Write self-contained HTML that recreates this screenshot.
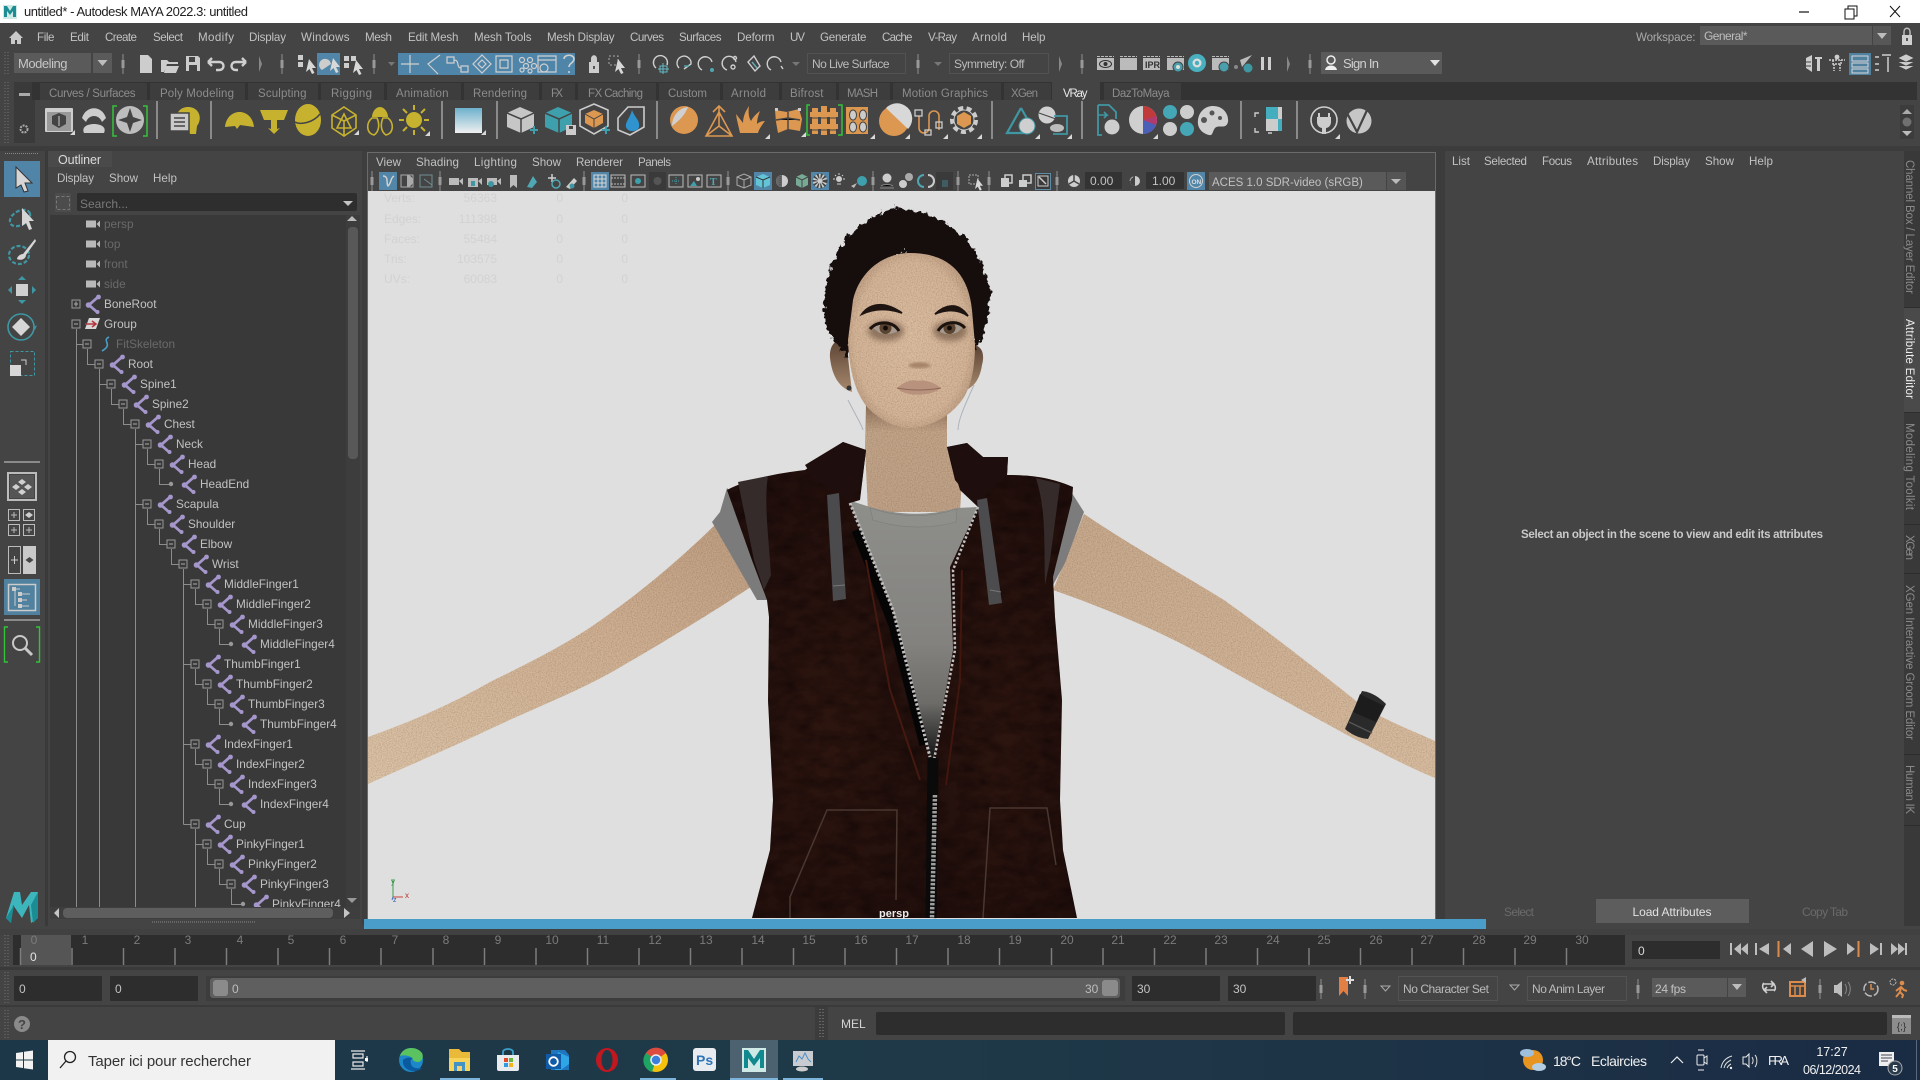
<!DOCTYPE html>
<html lang="fr"><head><meta charset="utf-8"><title>untitled* - Autodesk MAYA 2022.3: untitled</title>
<style>
html,body{margin:0;padding:0;background:#444;width:1920px;height:1080px;overflow:hidden}
svg{display:block}
text{font-family:"Liberation Sans",sans-serif;font-size:12px;fill:#c2c2c2;white-space:pre}
.m text{font-size:11.6px}
.tab text{fill:#8c8c8c;font-size:11.5px}
.tree text{font-size:11.8px}
.dim{fill:#6a6a6a}
.tree text.dim{fill:#6a6a6a}
.tl text{fill:#7b7b7b;text-anchor:middle}
.hud text{fill:#d2d2d2}
.vt text{fill:#8a8a8a;font-size:11.5px}
.tb text{fill:#f0f0f0}
.st{fill:none;stroke:#cfcfcf;stroke-width:1.5}
.w{fill:#cdcdcd}
.y{fill:#c7b22f}
.yo{fill:none;stroke:#c7b22f;stroke-width:1.6}
.o{fill:#dc9750}
.oo{fill:none;stroke:#dc9750;stroke-width:1.6}
.te{fill:#3fa0ad}
.teo{fill:none;stroke:#3f97a3;stroke-width:1.6}
</style></head><body>
<svg width="1920" height="1080" viewBox="0 0 1920 1080" xmlns="http://www.w3.org/2000/svg">
<defs>
<g id="j"><path d="M5-7-4 1 4 8" fill="none" stroke="#a596cc" stroke-width="2.800"/><circle cx="5.500" cy="-7" r="2.400" fill="#a596cc"/><circle cx="-4.500" cy="1" r="2.800" fill="#a596cc"/><circle cx="4.500" cy="8" r="2" fill="#a596cc"/></g>
<g id="b"><rect x="-4" y="-4" width="8" height="8" fill="#393939" stroke="#999"/><path d="M-2 0h4" stroke="#aaa"/></g>
<g id="d"><circle r="2.200" fill="#999"/></g>
<g id="cam"><rect x="-7" y="-3.500" width="10" height="7" fill="#b9b9b9"/><path d="M3.500 0 7-3.500V3.500z" fill="#b9b9b9"/></g>
<path id="c" d="M0 0-5 5H0z" fill="#d8d8d8"/>
<path id="da" d="M-5-3H5L0 3z" fill="#bdbdbd"/>
<g id="sep"><path d="M0-10V10" stroke="#777" stroke-width="1.500"/><rect x="-1.500" y="-4" width="3" height="8" fill="#999"/></g>
<path id="ptr" d="M0-7 7 2H3L5.500 7 3 8 .5 3-3 6z" fill="#d8d8d8"/>
<g id="bar"><path d="M0-19V19" stroke="#8a8a8a" stroke-width="2"/></g>
<linearGradient id="sky" x1="0" y1="0" x2="0" y2="1"><stop offset="0" stop-color="#6db1cc"/><stop offset="1" stop-color="#f0f0f0"/></linearGradient>
<linearGradient id="tee" x1="0" y1="0" x2="0" y2="1"><stop offset="0" stop-color="#8e8e8b"/><stop offset=".55" stop-color="#83827f"/><stop offset=".78" stop-color="#6d6c69"/><stop offset="1" stop-color="#111"/></linearGradient>
<linearGradient id="armL" x1="0" y1="1" x2="1" y2="0"><stop offset="0" stop-color="#dcc4a8"/><stop offset=".6" stop-color="#cfb093"/><stop offset="1" stop-color="#bd9d80"/></linearGradient>
<linearGradient id="armR" x1="0" y1="0" x2="1" y2="1"><stop offset="0" stop-color="#c7a98d"/><stop offset=".6" stop-color="#d2b598"/><stop offset="1" stop-color="#d9bea2"/></linearGradient>
<linearGradient id="tbg" x1="0" y1="0" x2="1" y2="0"><stop offset="0" stop-color="#1c3848"/><stop offset=".5" stop-color="#1f3948"/><stop offset="1" stop-color="#1a2b44"/></linearGradient>
<radialGradient id="face" cx=".5" cy=".5" r=".62"><stop offset="0" stop-color="#dcbea2"/><stop offset=".72" stop-color="#d5b699"/><stop offset="1" stop-color="#aa8b71"/></radialGradient>
<radialGradient id="jk" cx=".5" cy=".6" r=".7"><stop offset="0" stop-color="#2d150f"/><stop offset="1" stop-color="#1f0e0c"/></radialGradient>
<linearGradient id="neck" x1="0" y1="0" x2="0" y2="1"><stop offset="0" stop-color="#8d7059"/><stop offset=".25" stop-color="#c2a589"/><stop offset="1" stop-color="#bfa287"/></linearGradient>
<linearGradient id="earG" x1="0" y1="0" x2="0" y2="1"><stop offset="0" stop-color="#5a4334"/><stop offset="1" stop-color="#a8896d"/></linearGradient>
<filter id="curl" x="-10%" y="-10%" width="120%" height="120%"><feTurbulence type="fractalNoise" baseFrequency=".16" numOctaves="3" seed="4"/><feDisplacementMap in="SourceGraphic" scale="10" xChannelSelector="R" yChannelSelector="G"/></filter>
<filter id="sf"><feGaussianBlur stdDeviation="1.200"/></filter>
<filter id="sf2" x="-30%" y="-30%" width="160%" height="160%"><feGaussianBlur stdDeviation="3"/></filter>
<filter id="grain" x="0" y="0" width="100%" height="100%" color-interpolation-filters="sRGB"><feTurbulence type="fractalNoise" baseFrequency=".8" numOctaves="2" seed="3"/><feColorMatrix type="matrix" values="0 0 0 0 .3  0 0 0 0 .18  0 0 0 0 .1  .45 0 0 0 -.17"/><feComposite in2="SourceAlpha" operator="in" result="m"/><feMerge><feMergeNode in="SourceGraphic"/><feMergeNode in="m"/></feMerge></filter>
<filter id="suede" x="0" y="0" width="100%" height="100%" color-interpolation-filters="sRGB"><feTurbulence type="fractalNoise" baseFrequency=".05 .09" numOctaves="3" seed="9"/><feColorMatrix type="matrix" values="0 0 0 0 .04  0 0 0 0 .01  0 0 0 0 .01  .9 0 0 0 -.3"/><feComposite in2="SourceAlpha" operator="in" result="m"/><feMerge><feMergeNode in="SourceGraphic"/><feMergeNode in="m"/></feMerge></filter>
<clipPath id="gl"><rect x="368" y="191" width="1067" height="728"/></clipPath>
<clipPath id="tr"><rect x="50" y="215" width="296" height="692"/></clipPath>
</defs>

<!-- base -->
<rect width="1920" height="1080" fill="#444"/>
<!-- title bar -->
<rect width="1920" height="23" fill="#fff"/>
<rect x="3" y="5" width="14" height="14" fill="#cfe9e6"/>
<path d="M4 17V6h3l3 5 3-5h3v11h-3v-6l-3 4-3-4v6z" fill="#1c8d93"/>
<text x="24" y="16" style="font-size:13px;fill:#222" textLength="224" lengthAdjust="spacing">untitled* - Autodesk MAYA 2022.3: untitled</text>
<path d="M1799 12h10" stroke="#111" stroke-width="1.200"/>
<path d="M1845 9h9v10h-9zM1848 9V6h9v10h-3" fill="none" stroke="#111"/>
<path d="M1890 6l10 11M1900 6l-10 11" stroke="#111"/>

<!-- menu bar -->
<path d="M9 38 16 31l7 7h-2v6h-4v-4h-2v4h-4v-6z" fill="#c9c9c9"/>
<g class="m">
<text x="37" y="41" textLength="17.500">File</text><text x="70" y="41" textLength="19">Edit</text><text x="105" y="41" textLength="32">Create</text><text x="153" y="41" textLength="30">Select</text><text x="198" y="41" textLength="36">Modify</text><text x="249" y="41" textLength="37">Display</text><text x="301" y="41" textLength="48.500">Windows</text><text x="365" y="41" textLength="27">Mesh</text><text x="408" y="41" textLength="50.500">Edit Mesh</text><text x="474" y="41" textLength="57.500">Mesh Tools</text><text x="547" y="41" textLength="67.500">Mesh Display</text><text x="630" y="41" textLength="34">Curves</text><text x="679" y="41" textLength="42.500">Surfaces</text><text x="737" y="41" textLength="37.500">Deform</text><text x="790" y="41" textLength="15">UV</text><text x="820" y="41" textLength="46.500">Generate</text><text x="882" y="41" textLength="30.500">Cache</text><text x="928" y="41" textLength="29">V-Ray</text><text x="972" y="41" textLength="35">Arnold</text><text x="1022" y="41" textLength="23.500">Help</text>
<text x="1636" y="41" style="fill:#aaa" textLength="59.500">Workspace:</text>
</g>
<rect x="1700" y="26" width="172" height="19" fill="#5a5a5a"/>
<rect x="1873" y="26" width="18" height="19" fill="#575757"/>
<text x="1704" y="40" style="fill:#bdbdbd" textLength="43.500">General*</text>
<use href="#da" x="1882" y="36"/>
<path d="M1902 35h10v10h-10z" fill="#d0d0d0"/><path d="M1904 35v-3c0-5 6-5 6 0v3" fill="none" stroke="#bbb" stroke-width="1.500"/><rect x="1906" y="38" width="2" height="3" fill="#555"/>

<!-- status line -->
<g stroke="#6f6f6f" stroke-dasharray="1 2"><path d="M5 52V76M8 52V76M5 82V144M8 82V144"/></g>
<rect x="14" y="53" width="77" height="20" fill="#5a5a5a"/>
<rect x="93" y="53" width="19" height="20" fill="#5a5a5a"/>
<text x="18" y="68" style="font-size:13px;fill:#c6c6c6" textLength="49.500">Modeling</text>
<use href="#da" x="102.500" y="63"/>
<use href="#sep" x="123" y="64"/>
<path d="M140 55h8l4 4v14h-12z" class="w"/>
<path d="M161 60h6l2 2h9v2h-11l-3 8h-3zM166 66h13l-3 7h-12z" class="w"/>
<path d="M186 56h12l2 2v13h-14zM189 57h6v5h-6zM189 65h8v6h-8z" fill="#ccc" fill-rule="evenodd"/>
<path d="M208 62h11c6 0 6 8 0 8h-3M208 62l4-4M208 62l4 4" class="st" style="stroke-width:2.400"/>
<path d="M246 62h-10c-6 0-6 8 0 8h2M246 62l-4-4M246 62l-4 4" class="st" style="stroke-width:2.400"/>
<path d="M259 56v16l3-8z" fill="#888"/>
<use href="#sep" x="282" y="64"/>
<rect x="298" y="55" width="5" height="5" class="w"/><rect x="298" y="62" width="5" height="5" class="w"/><use href="#ptr" x="309" y="66"/>
<rect x="317" y="53" width="23" height="22" fill="#5286a8"/><path d="M322 70a6 6 0 1 1 9-6z" class="w"/><use href="#ptr" x="333" y="65"/>
<rect x="344" y="56" width="5" height="5" class="w"/><rect x="351" y="56" width="5" height="5" class="w"/><rect x="344" y="63" width="5" height="5" class="w"/><use href="#ptr" x="356" y="67"/>
<use href="#sep" x="374" y="64"/>
<path d="M388 62h7l-3.500 4z" fill="#777"/>
<rect x="398" y="53" width="177" height="22" fill="#4f85a9"/>
<g class="st" style="stroke-width:1.200">
<path d="M410 55V73M401 64H419"/>
<path d="M440 55 428 64 438 74"/>
<path d="M447 57h7v6h-7zM461 66h7v6h-7zM454 60c6 0 2 8 7 8"/>
<path d="M482 55l9 9-9 9-9-9zM482 60l4 4-4 4-4-4z"/>
<path d="M496 56h16v16h-16zM500 60h8v8h-8z"/>
<circle cx="522" cy="60" r="2.500"/><circle cx="530" cy="60" r="2.500"/><circle cx="526" cy="66" r="2.500"/><circle cx="534" cy="66" r="2.500"/><circle cx="522" cy="70" r="2"/><circle cx="530" cy="71" r="2"/>
<path d="M538 56h18v16h-18zM538 60h18"/><circle cx="544" cy="68" r="4"/>
<path d="M564 59c0-5 10-5 10 0 0 4-5 4-5 8M569 71v2" style="stroke-width:1.600"/>
</g>
<path d="M589 62h10v11h-10zM591 62v-3c0-5 6-5 6 0v3" fill="#ccc"/><rect x="593" y="66" width="2" height="3" fill="#555"/>
<path d="M609 56h9v9h-9z" fill="none" stroke="#aaa" stroke-dasharray="2 2"/><use href="#ptr" x="618" y="66"/>
<use href="#sep" x="639" y="64"/>
<g class="st" style="stroke-width:1.400">
<path d="M656 68a7 7 0 1 1 11-3"/><path d="M658 69h11M663 63v11M660 66h7v6h-7z" style="stroke-width:1;stroke:#66b9c4"/>
<path d="M679 68a7 7 0 1 1 12-4l-7 5"/><path d="M684 66h5" style="stroke:#4fa7b3"/>
<path d="M702 70a7 7 0 1 1 10-8"/><circle cx="712" cy="70" r="2" style="fill:#4fa7b3;stroke:none"/>
<path d="M727 70a7 7 0 1 1 9-8"/><circle cx="735" cy="58" r="1.500"/><circle cx="733" cy="67" r="2"/>
<path d="M748 62l6-6 6 10-5 5z"/><path d="M752 62l5 6" style="stroke:#69a9b5"/>
<path d="M771 70a7 7 0 1 1 10-8"/><path d="M781 66l2 3"/>
</g>
<path d="M792 62h8l-4 4z" fill="#777"/>
<rect x="807.500" y="53.500" width="98" height="20" fill="none" stroke="#525252"/>
<text x="812" y="68" style="fill:#bbb" textLength="77.500">No Live Surface</text>
<use href="#sep" x="918" y="64"/>
<path d="M934 62h8l-4 4z" fill="#777"/>
<rect x="949.500" y="53.500" width="99" height="20" fill="none" stroke="#525252"/>
<text x="954" y="68" style="fill:#bbb" textLength="70.500">Symmetry: Off</text>
<path d="M1059 56v16l3-8z" fill="#888"/>
<use href="#sep" x="1082" y="64"/>
<g stroke="#bbb" stroke-dasharray="3 1"><path d="M1097 56.500h17M1120 56.500h17M1143 56.500h17M1167 56.500h17M1212 56.500h17"/></g>
<rect x="1097" y="58" width="17" height="12" fill="#bbb"/><ellipse cx="1105.500" cy="64" rx="6" ry="3.500" fill="none" stroke="#333"/><circle cx="1105.500" cy="64" r="2" fill="#333"/>
<rect x="1120" y="58" width="17" height="12" fill="#bbb"/>
<rect x="1143" y="58" width="17" height="12" fill="#bbb"/><text x="1145" y="68" style="font-size:9px;fill:#333;font-weight:bold">IPR</text>
<rect x="1167" y="58" width="17" height="12" fill="#bbb"/><circle cx="1178" cy="67" r="5" fill="#49a0ac" stroke="#444"/><circle cx="1178" cy="67" r="2" fill="#ddd"/>
<circle cx="1197" cy="63" r="9" fill="#49b0c0"/><circle cx="1197" cy="63" r="4.500" fill="#ddd"/><circle cx="1197" cy="63" r="2.200" fill="#49b0c0"/>
<rect x="1212" y="58" width="17" height="12" fill="#bbb"/><circle cx="1224" cy="67" r="5" fill="#49a0ac" stroke="#444"/>
<path d="M1240 60 1252 55l-10 12z" fill="#bbb"/><circle cx="1248" cy="68" r="4.500" fill="#3f97a3"/><circle cx="1236" cy="67" r="2" fill="#888"/>
<rect x="1261" y="57" width="3" height="13" class="w"/><rect x="1268" y="57" width="3" height="13" class="w"/>
<path d="M1287 56v16l3-8z" fill="#888"/>
<use href="#sep" x="1310" y="64"/>
<rect x="1321" y="52" width="121" height="22" fill="#5a5a5a"/>
<circle cx="1331" cy="60" r="4" fill="none" stroke="#eee" stroke-width="1.500"/><path d="M1325 70c1-6 11-6 12 0z" fill="#eee"/>
<text x="1343" y="68" style="font-size:13px;fill:#d0d0d0" textLength="36">Sign In</text>
<path d="M1430 60h10l-5 6z" fill="#e2e2e2"/>
<!-- right status -->
<path d="M1806 58l6-3v17l-6-4zM1815 57h7v2h-2v12h-3V59h-2z" class="w"/><path d="M1806 62h5M1806 66h5" stroke="#444"/>
<circle cx="1837" cy="57" r="2.400" class="w"/><path d="M1829 60h16M1833 60v4h8v-4M1834 64v7M1840 64v7" class="st" style="stroke-dasharray:2 1"/>
<rect x="1849" y="53" width="22" height="22" fill="#50819f"/><path d="M1852 56h16v5h-16zM1852 63h16v4h-16zM1852 69h16v4h-16z" fill="none" stroke="#d8d8d8"/>
<path d="M1875 57h4M1875 64h4M1875 70h4M1882 55h9M1888 57v15" class="st"/>
<path d="M1906 54l8 4-8 4-8-4zM1898 62l8 4 8-4M1898 66l8 4 8-4" fill="#ccc" stroke="#444" stroke-width=".6"/>

<!-- shelf -->
<rect x="14" y="82" width="21" height="61" fill="#3a3a3a"/>
<rect x="32" y="82" width="1885" height="18" fill="#333"/>
<rect x="19" y="93" width="11" height="3" fill="#aaa"/>
<circle cx="24" cy="129" r="3.500" fill="none" stroke="#aaa" stroke-width="2" stroke-dasharray="2 1"/>
<g fill="#3d3d3d">
<rect x="40" y="83" width="107" height="17"/><rect x="150" y="83" width="95" height="17"/><rect x="248" y="83" width="70" height="17"/><rect x="321" y="83" width="63" height="17"/><rect x="387" y="83" width="74" height="17"/><rect x="464" y="83" width="75" height="17"/><rect x="542" y="83" width="33" height="17"/><rect x="578" y="83" width="78" height="17"/><rect x="659" y="83" width="61" height="17"/><rect x="723" y="83" width="56" height="17"/><rect x="782" y="83" width="54" height="17"/><rect x="839" y="83" width="51" height="17"/><rect x="893" y="83" width="108" height="17"/><rect x="1004" y="83" width="47" height="17"/><rect x="1104" y="83" width="77" height="17"/>
</g>
<rect x="1052" y="82" width="48" height="18" fill="#444"/>
<g class="tab">
<text x="49" y="97" textLength="86.500">Curves / Surfaces</text><text x="160" y="97" textLength="74">Poly Modeling</text><text x="258" y="97" textLength="48.500">Sculpting</text><text x="331" y="97" textLength="41">Rigging</text><text x="396" y="97" textLength="52.500">Animation</text><text x="473" y="97" textLength="54">Rendering</text><text x="551" y="97" textLength="12">FX</text><text x="588" y="97" textLength="55">FX Caching</text><text x="668" y="97" textLength="39">Custom</text><text x="731" y="97" textLength="35">Arnold</text><text x="790" y="97" textLength="33.500">Bifrost</text><text x="847" y="97" textLength="31">MASH</text><text x="902" y="97" textLength="86">Motion Graphics</text><text x="1011" y="97" textLength="27">XGen</text><text x="1063" y="97" style="fill:#e8e8e8" textLength="24.500">VRay</text><text x="1112" y="97" textLength="57.500">DazToMaya</text>
</g>
<!-- shelf separators -->
<use href="#bar" x="157" y="120"/><use href="#bar" x="211" y="120"/><use href="#bar" x="442" y="120"/><use href="#bar" x="497" y="120"/><use href="#bar" x="657" y="120"/><use href="#bar" x="992" y="120"/><use href="#bar" x="1082" y="120"/><use href="#bar" x="1241" y="120"/><use href="#bar" x="1297" y="120"/>
<!-- shelf icons -->
<rect x="45" y="108" width="28" height="24" rx="1" class="w"/><rect x="47" y="112" width="24" height="19" fill="#999"/><path d="M59 113l7 3v8l-7 4-7-4v-8z" fill="#444"/><path d="M59 116v10" stroke="#ccc"/><use href="#c" x="75" y="130"/>
<path d="M82 118c4-13 20-13 24 0l-4 4c-3-8-13-8-16 0z" class="w"/><path d="M84 133c-3-7 5-9 10-9s13 2 10 9z" class="w"/>
<circle cx="130" cy="120" r="14" fill="#bdbdbd"/><path d="M130 108l3 9 9 3-9 3-3 9-3-9-9-3 9-3z" fill="#444"/><path d="M117 106h-4v30h4M143 106h4v30h-4" fill="none" stroke="#34c23a" stroke-width="1.500"/>
<path d="M188 107c-7 0-11 5-11 9l11 6 2 12h6l1-8c6-8 2-19-9-19z" class="y"/><rect x="170" y="113" width="19" height="18" fill="#c9c9c9" stroke="#444" stroke-width="1.500"/><path d="M174 118h11M174 122h11M174 126h11" stroke="#444" stroke-width="1.500"/>
<path d="M225 127c2-20 27-20 29 0l-14-2-3 4-2-3z" class="y"/>
<path d="M260 110h28l-4 10h-7v9l3-1-6 6-6-6 3 1v-9h-7z" class="y"/>
<ellipse cx="308" cy="120" rx="13" ry="16" class="y"/><path d="M295 122c5 3 18 1 25-8" fill="none" stroke="#444" stroke-width="1.500"/>
<path d="M344 107l12 8v13l-12 8-12-8v-13zM332 115l12 6 12-6M344 121v15M337 128l7-14 7 14z" class="yo"/><use href="#c" x="359" y="130"/>
<path d="M380 107c5 0 8 6 8 10h-16c0-4 3-10 8-10z" class="y"/><path d="M372 118c-6 5-6 15 2 17 5-3 6-11 3-17zM388 118c6 5 6 15-2 17-5-3-6-11-3-17z" class="yo"/>
<circle cx="414" cy="120" r="8" class="y"/><path d="M414 105v5M414 130v5M399 120h5M424 120h5M403 109l4 4M421 127l4 4M425 109l-4 4M403 131l4-4" stroke="#c7b22f" stroke-width="2"/><use href="#c" x="430" y="131"/>
<rect x="455" y="108" width="27" height="25" fill="url(#sky)"/><use href="#c" x="486" y="130"/>
<path d="M520 107l14 6v14l-13 6-14-6v-14z" fill="#c6c6c6"/><path d="M507 113l14 6 13-6M521 119v14" stroke="#444" stroke-width="1.500" fill="none"/><path d="M530 130h8M534 126v8" stroke="#3fa0ad" stroke-width="2"/>
<path d="M558 107l14 6v14l-13 6-14-6v-14z" class="te"/><path d="M545 113l14 6 13-6M559 119v14" stroke="#444" stroke-width="1.500" fill="none"/><rect x="566" y="125" width="10" height="10" fill="#ccc"/><rect x="569" y="126" width="4" height="3" fill="#444"/>
<path d="M594 104l14 6v16l-14 8-14-8v-16z" fill="none" stroke="#ccc" stroke-width="1.600"/><path d="M594 110l9 4v9l-9 5-9-5v-9z" class="o"/><path d="M585 114l9 5 9-5M594 119v9" stroke="#444" fill="none"/><path d="M602 130h8M606 126v8" stroke="#3fa0ad" stroke-width="2"/>
<path d="M618 118l10-11h16v20l-14 8-12-5z" fill="none" stroke="#ccc" stroke-width="1.600"/><path d="M632 110c3 8 8 10 7 17-1 5-11 6-13 0-1-5 4-9 6-17z" fill="#2f93cf"/>
<circle cx="684" cy="120" r="14" class="o"/><path d="M672 126c0-9 6-18 16-19-3 8-9 14-16 19z" fill="#d0d0d0"/>
<path d="M719 106v7M713 112l6-6 6 6M719 112l-13 24h26zM719 112v14M706 136l13-10 13 10" class="oo"/>
<path d="M740 133c-2-9-3-12-4-19 3 4 5 6 7 9 0-6 2-11 6-17-1 7 0 12 2 15 2-4 6-8 9-10-2 5-3 9-3 13 2-2 5-3 8-3-3 4-6 8-7 12z" class="o"/><use href="#c" x="770" y="134"/>
<path d="M775 110l12 2 12-3 3 10-2 12-12-2-10 4-2-11z" class="o"/><path d="M776 120l12-2 12 2M788 112v18" stroke="#444" stroke-width="1.400"/><g fill="#ccc"><rect x="775" y="108" width="3" height="3"/><rect x="798" y="108" width="3" height="3"/></g><use href="#c" x="806" y="132"/>
<path d="M810 105h-3v30h3M838 105h4v30h-4" fill="none" stroke="#34c23a" stroke-width="1.500"/>
<g class="o"><rect x="812" y="108" width="6" height="26"/><rect x="821" y="106" width="6" height="29"/><rect x="830" y="108" width="6" height="26"/><rect x="810" y="112" width="28" height="5"/><rect x="810" y="124" width="28" height="5"/></g><path d="M810 118h28M810 130h28" stroke="#444"/>
<rect x="846" y="107" width="22" height="27" class="o"/><g fill="#ccc" stroke="#444"><ellipse cx="853" cy="115" rx="3.500" ry="5"/><ellipse cx="863" cy="115" rx="3.500" ry="5"/><ellipse cx="853" cy="127" rx="3.500" ry="5"/><ellipse cx="863" cy="127" rx="3.500" ry="5"/></g><use href="#c" x="875" y="134"/>
<circle cx="894" cy="121" r="15" class="o"/><path d="M886 108a15 15 0 0 1 22 21z" fill="#d8d8d8"/><use href="#c" x="910" y="134"/>
<path d="M919 116v12a5 5 0 0 0 10 0v-12a5 5 0 0 1 10 0v14" class="oo"/><g fill="none" stroke="#ccc" stroke-width="1.300"><rect x="915" y="110" width="7" height="6"/><rect x="936" y="122" width="6" height="6"/><rect x="925" y="130" width="6" height="5"/></g><use href="#c" x="948" y="134"/>
<g transform="translate(964 120)"><circle r="12" fill="none" stroke="#ccc" stroke-width="4" stroke-dasharray="5 3.400"/><circle r="10" fill="none" stroke="#ccc" stroke-width="1"/><path d="M0-8 7-4V4L0 8-7 4V-4z" class="o"/></g><use href="#c" x="982" y="134"/>
<path d="M1021 108 1007 133h20" class="teo" style="stroke-width:2.200"/><path d="M1021 108l8 14" class="teo" style="stroke-width:2.200"/><circle cx="1027" cy="126" r="8" fill="#cfcfcf" stroke="#3f97a3"/><use href="#c" x="1040" y="134"/>
<circle cx="1047" cy="115" r="8.500" fill="#d0d0d0"/><path d="M1039 113 1056 119" stroke="#444"/><path d="M1054 116h13v18h-14" class="teo" style="stroke-width:1.800"/><ellipse cx="1057" cy="128" rx="7" ry="4" fill="#bcbcbc"/><use href="#c" x="1072" y="134"/>
<path d="M1098 105h11l7 7v7M1098 105v30h4" class="teo" style="stroke-width:1.800"/><path d="M1098 115h9l-3-3M1107 115l-3 3" class="teo"/><circle cx="1112" cy="127" r="7.500" class="w"/>
<circle cx="1143" cy="120" r="14" fill="#cfcfcf"/><path d="M1143 106a14 14 0 0 1 0 28z" fill="#b03a6e"/><path d="M1143 106a14 14 0 0 1 13 10l-13 4z" fill="#c13a3a"/><path d="M1143 120l13 5a14 14 0 0 1-13 9z" fill="#4a5fb8"/><use href="#c" x="1158" y="134"/>
<circle cx="1170" cy="112" r="7" fill="#45a6b5"/><circle cx="1187" cy="112" r="7" class="w"/><circle cx="1170" cy="129" r="7" class="w"/><circle cx="1187" cy="129" r="7" fill="#45a6b5"/>
<path d="M1213 106c11 0 16 9 15 16-2 8-9 2-13 6-3 4-2 8-6 7-8-2-12-8-11-15 1-9 8-14 15-14z" fill="#d0d0d0"/><circle cx="1212" cy="113" r="2.500" fill="#555"/><circle cx="1204" cy="120" r="3" fill="#555"/><circle cx="1220" cy="118" r="2" fill="#555"/>
<rect x="1266" y="107" width="12" height="12" fill="#44aebf"/><rect x="1278" y="107" width="4" height="12" fill="#ccc"/><rect x="1266" y="119" width="12" height="12" fill="#ccc"/><rect x="1278" y="119" width="4" height="12" fill="#44aebf"/><path d="M1255 117v-4h4M1255 128v4h4M1272 133h-4" fill="none" stroke="#ccc" stroke-width="1.400"/>
<circle cx="1324" cy="120" r="13" fill="none" stroke="#cfcfcf" stroke-width="1.600"/><path d="M1318 113v4h-1v5c0 4 3 6 5 6v6h4v-6c2 0 5-2 5-6v-5h-1v-4h-2v4h-8v-4z" class="w"/><use href="#c" x="1340" y="134"/>
<circle cx="1359" cy="121" r="12.500" fill="#c6c6c6"/><path d="M1347 113l10 19 11-24" fill="none" stroke="#444" stroke-width="2.200"/>
<rect x="1900" y="105" width="14" height="34" fill="#3c3c3c"/><path d="M1902 114l5-5 5 5z" fill="#aaa"/><circle cx="1907" cy="122" r="4.500" fill="#707070"/><path d="M1902 131l5 5 5-5z" fill="#bbb"/>

<!-- panel dividing bg -->
<rect y="146" width="1920" height="5" fill="#3c3c3c"/>

<!-- toolbox -->
<rect y="151" width="45" height="790" fill="#444"/>
<rect x="45" y="151" width="3" height="790" fill="#3a3a3a"/>
<path d="M5 153.500h34" stroke="#888" stroke-dasharray="1 1"/>
<rect x="4" y="161" width="36" height="36" fill="#5085a8"/>
<path d="M16 167 32 183 25 183 28 191 24 192 21 185 16 188z" fill="#d6d6d6" stroke="#333"/>
<ellipse cx="20" cy="218" rx="11" ry="7" fill="none" stroke="#3f97a3" stroke-width="2.200" stroke-dasharray="4 2" transform="rotate(-30 20 218)"/><path d="M22 208 34 221 29 221 32 229 29 230 26 223 22 226z" fill="#d6d6d6"/>
<ellipse cx="19" cy="255" rx="10" ry="9" fill="none" stroke="#3f97a3" stroke-width="2.200" stroke-dasharray="4 2"/><path d="M35 239 23 254c-3 0-6 3-6 5 4 2 9 0 9-4l10-14z" fill="#d6d6d6"/>
<rect x="16" y="284" width="12" height="12" fill="#d0d0d0"/><path d="M22 276l4 4h-8zM22 304l4-4h-8zM8 290l4-4v8zM36 290l-4-4v8z" fill="#3f97a3"/>
<circle cx="21" cy="327" r="13" fill="none" stroke="#3f97a3" stroke-width="1.600"/><path d="M21 318l9 9-9 9-9-9z" fill="#d6d6d6"/><path d="M34 327l3-2-2 5z" fill="#3f97a3"/>
<rect x="10.500" y="351.500" width="24" height="24" fill="none" stroke="#3f97a3" stroke-dasharray="3 2"/><rect x="10" y="365" width="11" height="11" fill="#d6d6d6"/><path d="M21 360h5v5" fill="none" stroke="#ccc"/>
<rect x="4" y="461" width="36" height="2" fill="#8a8a8a"/>
<rect x="8" y="473" width="28" height="27" fill="none" stroke="#bbb" stroke-width="2"/><rect x="10" y="475" width="24" height="23" fill="#555"/>
<path d="M22 479l4 3-4 3-4-3zM16 484l4 3-4 3-4-3zM28 484l4 3-4 3-4-3zM22 489l4 3-4 3-4-3z" fill="#d0d0d0"/>
<g fill="none" stroke="#bbb"><rect x="8.500" y="509.500" width="11" height="11"/><rect x="23.500" y="509.500" width="11" height="11"/><rect x="8.500" y="524.500" width="11" height="11"/><rect x="23.500" y="524.500" width="11" height="11"/><path d="M11 515h6M14 512v6M11 530h6M14 527v6M26 530h6M29 527v6"/></g>
<path d="M29 512l4 3-4 3-4-3z" fill="#ccc"/>
<rect x="8.500" y="546.500" width="12" height="27" fill="none" stroke="#bbb"/><rect x="23" y="546" width="13" height="28" fill="#c9c9c9"/><path d="M11 560h7M14.500 556v8" stroke="#ccc"/><path d="M29.500 557l4 3-4 3-4-3z" fill="#444"/>
<rect x="4" y="579" width="36" height="36" fill="#50819f"/><rect x="8.500" y="584.500" width="27" height="26" fill="none" stroke="#ccc" stroke-width="1.500"/><path d="M14 589h6M20 594h10M20 600h7M20 606h9M15 590v16" stroke="#ccc"/><g fill="#ccc"><rect x="12" y="587" width="4" height="4"/><rect x="18" y="592" width="4" height="4"/><rect x="18" y="598" width="4" height="4"/><rect x="18" y="604" width="4" height="4"/></g>
<rect x="4" y="619" width="36" height="2" fill="#8a8a8a"/>
<path d="M8 627h-3.500v35H8M36 627h3.500v35H36" fill="none" stroke="#34c23a" stroke-width="1.400"/>
<circle cx="20" cy="643" r="7" fill="none" stroke="#c9c9c9" stroke-width="2"/><path d="M25 648 32 655" stroke="#c9c9c9" stroke-width="3"/>
<path d="M6 918 14 892h6l2 13 9-13h7v26l-7 5-2-18-7 13-9-13-2 18z" fill="#3cb5bc"/>
<path d="M6 918 14 905 11 923zM38 918V892l-7 13 2 18z" fill="#1b8c93"/>

<!-- outliner -->
<rect x="48" y="151" width="64" height="16" fill="#4a4a4a"/>
<text x="58" y="164" style="font-size:12.500px;fill:#dadada" textLength="43">Outliner</text>
<rect x="48" y="167" width="314" height="758" fill="#444"/>
<g class="m"><text x="57" y="182" textLength="37">Display</text><text x="109" y="182" textLength="29">Show</text><text x="153" y="182" textLength="24">Help</text></g>
<rect x="55" y="193" width="16" height="19" fill="#4c4c4c"/><rect x="56.500" y="196.500" width="13" height="13" fill="none" stroke="#777" stroke-dasharray="3 2"/>
<rect x="77" y="193" width="280" height="18" rx="2" fill="#2e2e2e"/>
<text x="80" y="208" style="fill:#7a7a7a">Search...</text>
<path d="M343 201h10l-5 5z" fill="#c4c4c4"/>
<rect x="50" y="215" width="296" height="692" fill="#393939"/>
<rect x="346" y="215" width="14" height="692" fill="#3d3d3d"/>
<path d="M347 221l5-5 5 5z" fill="#bbb"/>
<rect x="348" y="227" width="10" height="232" rx="4" fill="#585858"/>
<path d="M347 898h10l-5 5z" fill="#999"/>
<rect x="50" y="907" width="310" height="12" fill="#3e3e3e"/>
<path d="M54 913l5-5v10zM344 908l6 5-6 5z" fill="#c4c4c4"/>
<rect x="63" y="908" width="270" height="10" rx="4" fill="#5e5e5e"/>
<path d="M152 922H255" stroke="#888" stroke-dasharray="1 1"/>

<g clip-path="url(#tr)" class="tree">
<path fill="none" stroke="#8c8c8c" d="M76.500 329V907M76.500 344.500H83M87.500 349V364.500H95M99.500 369V907M99.500 384.500H107M111.500 389V404.500H119M123.500 409V424.500H131M135.500 429V907M135.500 444.500H143M147.500 449V464.500H155M159.500 469V484.500H169M135.500 504.500H143M147.500 509V524.500H155M159.500 529V544.500H167M171.500 549V564.500H179M183.500 569V824.500M183.500 584.500H191M183.500 664.500H191M183.500 744.500H191M183.500 824.500H191M195.500 589V604.500H203M207.500 609V624.500H215M219.500 629V644.500H229M195.500 669V684.500H203M207.500 689V704.500H215M219.500 709V724.500H229M195.500 749V764.500H203M207.500 769V784.500H215M219.500 789V804.500H229M195.500 829V907M195.500 844.500H203M207.500 849V864.500H215M219.500 869V884.500H227M231.500 889V904.500H241"/>
<use href="#cam" x="93" y="224"/><text x="104" y="228" class="dim">persp</text>
<use href="#cam" x="93" y="244"/><text x="104" y="248" class="dim">top</text>
<use href="#cam" x="93" y="264"/><text x="104" y="268" class="dim">front</text>
<use href="#cam" x="93" y="284"/><text x="104" y="288" class="dim">side</text>
<use href="#b" x="76" y="304"/><path d="M76 301.500v5" stroke="#aaa"/><use href="#j" x="93" y="304"/><text x="104" y="308">BoneRoot</text>
<use href="#b" x="76" y="324"/><path d="M89 318h11l-4 11H85z" fill="#d8d8d8"/><path d="M85 324h11M92 321l4 3-4 3" stroke="#b5353f" stroke-width="1.500" fill="none"/><text x="104" y="328">Group</text>
<use href="#b" x="87" y="344"/><path d="M109 337c-8 4 5 7-7 14" fill="none" stroke="#4a9ec6" stroke-width="1.600"/><text x="116" y="348" class="dim">FitSkeleton</text>
<use href="#b" x="99" y="364"/><use href="#j" x="117" y="364"/><text x="128" y="368">Root</text>
<use href="#b" x="111" y="384"/><use href="#j" x="129" y="384"/><text x="140" y="388">Spine1</text>
<use href="#b" x="123" y="404"/><use href="#j" x="141" y="404"/><text x="152" y="408">Spine2</text>
<use href="#b" x="135" y="424"/><use href="#j" x="153" y="424"/><text x="164" y="428">Chest</text>
<use href="#b" x="147" y="444"/><use href="#j" x="165" y="444"/><text x="176" y="448">Neck</text>
<use href="#b" x="159" y="464"/><use href="#j" x="177" y="464"/><text x="188" y="468">Head</text>
<use href="#d" x="171" y="484"/><use href="#j" x="189" y="484"/><text x="200" y="488">HeadEnd</text>
<use href="#b" x="147" y="504"/><use href="#j" x="165" y="504"/><text x="176" y="508">Scapula</text>
<use href="#b" x="159" y="524"/><use href="#j" x="177" y="524"/><text x="188" y="528">Shoulder</text>
<use href="#b" x="171" y="544"/><use href="#j" x="189" y="544"/><text x="200" y="548">Elbow</text>
<use href="#b" x="183" y="564"/><use href="#j" x="201" y="564"/><text x="212" y="568">Wrist</text>
<use href="#b" x="195" y="584"/><use href="#j" x="213" y="584"/><text x="224" y="588">MiddleFinger1</text>
<use href="#b" x="207" y="604"/><use href="#j" x="225" y="604"/><text x="236" y="608">MiddleFinger2</text>
<use href="#b" x="219" y="624"/><use href="#j" x="237" y="624"/><text x="248" y="628">MiddleFinger3</text>
<use href="#d" x="231" y="644"/><use href="#j" x="249" y="644"/><text x="260" y="648">MiddleFinger4</text>
<use href="#b" x="195" y="664"/><use href="#j" x="213" y="664"/><text x="224" y="668">ThumbFinger1</text>
<use href="#b" x="207" y="684"/><use href="#j" x="225" y="684"/><text x="236" y="688">ThumbFinger2</text>
<use href="#b" x="219" y="704"/><use href="#j" x="237" y="704"/><text x="248" y="708">ThumbFinger3</text>
<use href="#d" x="231" y="724"/><use href="#j" x="249" y="724"/><text x="260" y="728">ThumbFinger4</text>
<use href="#b" x="195" y="744"/><use href="#j" x="213" y="744"/><text x="224" y="748">IndexFinger1</text>
<use href="#b" x="207" y="764"/><use href="#j" x="225" y="764"/><text x="236" y="768">IndexFinger2</text>
<use href="#b" x="219" y="784"/><use href="#j" x="237" y="784"/><text x="248" y="788">IndexFinger3</text>
<use href="#d" x="231" y="804"/><use href="#j" x="249" y="804"/><text x="260" y="808">IndexFinger4</text>
<use href="#b" x="195" y="824"/><use href="#j" x="213" y="824"/><text x="224" y="828">Cup</text>
<use href="#b" x="207" y="844"/><use href="#j" x="225" y="844"/><text x="236" y="848">PinkyFinger1</text>
<use href="#b" x="219" y="864"/><use href="#j" x="237" y="864"/><text x="248" y="868">PinkyFinger2</text>
<use href="#b" x="231" y="884"/><use href="#j" x="249" y="884"/><text x="260" y="888">PinkyFinger3</text>
<use href="#d" x="243" y="904"/><use href="#j" x="261" y="904"/><text x="272" y="908">PinkyFinger4</text>
</g>

<!-- viewport -->
<rect x="362" y="151" width="1083" height="774" fill="#3e3e3e"/>
<rect x="367" y="153" width="1069" height="38" fill="#444"/>
<rect x="367.500" y="152.500" width="1068" height="767" fill="none" stroke="#6a6a6a"/>
<g class="m"><text x="376" y="166" textLength="25">View</text><text x="416" y="166" textLength="43">Shading</text><text x="474" y="166" textLength="43">Lighting</text><text x="532" y="166" textLength="29">Show</text><text x="576" y="166" textLength="47">Renderer</text><text x="638" y="166" textLength="33">Panels</text></g>
<rect x="368" y="191" width="1067" height="728" fill="#dfdfdf"/>
<g class="hud">
<text x="384" y="202">Verts:</text><text x="497" y="202" text-anchor="end">56363</text><text x="563" y="202" text-anchor="end">0</text><text x="628" y="202" text-anchor="end">0</text>
<text x="384" y="223">Edges:</text><text x="497" y="223" text-anchor="end">111398</text><text x="563" y="223" text-anchor="end">0</text><text x="628" y="223" text-anchor="end">0</text>
<text x="384" y="243">Faces:</text><text x="497" y="243" text-anchor="end">55484</text><text x="563" y="243" text-anchor="end">0</text><text x="628" y="243" text-anchor="end">0</text>
<text x="384" y="263">Tris:</text><text x="497" y="263" text-anchor="end">103575</text><text x="563" y="263" text-anchor="end">0</text><text x="628" y="263" text-anchor="end">0</text>
<text x="384" y="283">UVs:</text><text x="497" y="283" text-anchor="end">60083</text><text x="563" y="283" text-anchor="end">0</text><text x="628" y="283" text-anchor="end">0</text>
</g>

<!-- viewport icons -->
<use href="#sep" x="372" y="181"/>
<rect x="379" y="172" width="18" height="18" fill="#5286a8"/><path d="M383 176c6 0 3 8 5 10 4-4 2-8 6-10" class="st"/>
<rect x="401" y="175" width="12" height="12" fill="none" stroke="#aaa"/><path d="M407 175a6 6 0 0 1 0 12z" fill="#aaa"/>
<path d="M420 175h12v12h-12z" fill="none" stroke="#6f8f94"/><path d="M424 179l8 6" stroke="#6f8f94"/>
<use href="#sep" x="440" y="181"/>
<rect x="449" y="178" width="10" height="7" fill="#bbb"/><path d="M459 181l4-3v7z" fill="#bbb"/>
<rect x="468" y="178" width="10" height="9" fill="#bbb"/><path d="M478 181l4-3v7z" fill="#bbb"/><rect x="471" y="181" width="4" height="5" fill="#3f97a3"/>
<rect x="487" y="178" width="10" height="7" fill="#bbb"/><path d="M497 181l4-3v7z" fill="#bbb"/><circle cx="491" cy="184" r="3" fill="#3f97a3"/>
<path d="M510 175h7v13l-3.500-3-3.500 3z" fill="#bbb"/>
<path d="M527 187l6-11 4 6-5 6zM525 189h14" fill="#4fa7b3"/>
<path d="M552 174v8M548 178h8" class="st"/><circle cx="556" cy="184" r="4" fill="none" stroke="#4fa7b3" stroke-width="1.500"/>
<path d="M566 187l8-9 3 3-7 8z" class="w"/><circle cx="572" cy="186" r="2.500" fill="#3f97a3"/>
<use href="#sep" x="584" y="181"/>
<rect x="591" y="172" width="18" height="18" fill="#5286a8"/><path d="M594 175h12v12h-12zM598 175v12M602 175v12M594 179h12M594 183h12" fill="none" stroke="#d8d8d8"/>
<rect x="611" y="175" width="14" height="12" fill="none" stroke="#bbb"/><path d="M611 178h14M611 184h14" stroke="#bbb" stroke-dasharray="2 1"/>
<rect x="631" y="175" width="14" height="12" fill="none" stroke="#bbb"/><circle cx="638" cy="181" r="3" fill="#3fa0ad"/>
<rect x="649" y="172" width="17" height="18" fill="#3a3a3a"/><circle cx="657.500" cy="181" r="4" fill="#555"/>
<rect x="669" y="175" width="14" height="12" fill="none" stroke="#bbb"/><path d="M672 181h8M676 177v8" stroke="#3fa0ad" stroke-dasharray="1 1"/>
<rect x="688" y="175" width="14" height="12" fill="none" stroke="#bbb"/><path d="M690 186l4-5 3 5z" fill="#3fa0ad"/><circle cx="698" cy="179" r="2" fill="#ccc"/>
<rect x="707" y="175" width="14" height="12" fill="none" stroke="#bbb"/><text x="710" y="185" style="font-size:10px;fill:#4fa7b3;font-weight:bold;font-family:'Liberation Serif',serif">T</text>
<use href="#sep" x="728" y="181"/>
<path d="M744 174l7 3v8l-7 3-7-3v-8zM737 177l7 3 7-3M744 180v8" fill="none" stroke="#aaa"/>
<rect x="754" y="172" width="18" height="18" fill="#5286a8"/><path d="M763 174l7 3v8l-7 3-7-3v-8z" fill="#62c4d6"/><path d="M756 177l7 3 7-3M763 180v8" fill="none" stroke="#333"/>
<circle cx="782" cy="181" r="6" class="w"/><path d="M782 175a6 6 0 0 0 0 12z" fill="#666"/><path d="M780 176v10" stroke="#444" stroke-dasharray="1 1"/>
<path d="M802 174l6 3v8l-6 3-6-3v-8z" fill="#9ec" opacity=".6"/><path d="M796 177l6 3 6-3M802 180v8" fill="none" stroke="#444"/>
<rect x="811" y="172" width="18" height="18" fill="#5286a8"/><circle cx="820" cy="181" r="7" fill="#ccc"/><circle cx="820" cy="181" r="5" fill="none" stroke="#444" stroke-dasharray="1.500 1.500" stroke-width="5"/>
<circle cx="839" cy="179" r="3" class="w"/><path d="M839 173v2M833 179h2M843 179h2M835 175l1 1M843 175l-1 1" stroke="#ccc"/><path d="M837 184h4" stroke="#ccc"/>
<circle cx="862" cy="181" r="5" class="te"/><path d="M851 186l6-3-3 5z" fill="#bbb"/>
<use href="#sep" x="873" y="181"/>
<circle cx="887" cy="178" r="4.500" class="w"/><path d="M881 186c3-2 9-2 12 0M880 188h14" stroke="#888"/>
<circle cx="909" cy="177" r="4" fill="#aaa"/><circle cx="903" cy="184" r="4" class="w"/>
<path d="M924 175a6 6 0 0 0 0 12" fill="none" stroke="#4fa7b3" stroke-width="2"/><path d="M928 175a6 6 0 0 1 0 12" fill="none" stroke="#ccc" stroke-width="2"/>
<rect x="936" y="172" width="17" height="18" fill="#3a3a3a"/><rect x="942" y="180" width="6" height="7" fill="#3f5c62"/>
<use href="#sep" x="958" y="181"/>
<rect x="969" y="175" width="9" height="9" fill="none" stroke="#aaa" stroke-dasharray="2 1"/><use href="#ptr" x="978" y="184" transform="translate(195 37) scale(.8)"/>
<use href="#sep" x="989" y="181"/>
<rect x="1001" y="178" width="8" height="9" class="w"/><rect x="1005" y="175" width="7" height="8" fill="none" stroke="#ccc" stroke-width="1.500"/>
<rect x="1019" y="180" width="8" height="7" class="w"/><rect x="1023" y="175" width="8" height="8" fill="none" stroke="#ccc" stroke-width="1.500"/>
<rect x="1035.500" y="173.500" width="15" height="16" fill="#3a3a3a" stroke="#5d8ba6"/><rect x="1038" y="176" width="10" height="10" fill="none" stroke="#ccc"/><path d="M1039 177l7 7" stroke="#ccc" stroke-width="1.500"/>
<use href="#sep" x="1057" y="181"/>
<circle cx="1074" cy="181" r="6" class="w"/><path d="M1074 175v6M1074 181l5 3M1074 181l-5 3" stroke="#444" stroke-width="1.500"/>
<rect x="1085" y="172" width="37" height="17" rx="1" fill="#333"/><text x="1090" y="185">0.00</text>
<circle cx="1135" cy="181" r="5" fill="#ccc"/><path d="M1135 176a5 5 0 0 0 0 10z" fill="#444"/><path d="M1130 181a5 5 0 0 1 3-4" stroke="#aaa" fill="none"/>
<rect x="1146" y="172" width="38" height="17" rx="1" fill="#333"/><text x="1152" y="185">1.00</text>
<rect x="1187" y="172" width="18" height="18" fill="#5286a8"/><circle cx="1196" cy="181" r="6.500" fill="none" stroke="#d0d0d0"/><text x="1191.500" y="184" style="font-size:6.500px;fill:#ddd;font-weight:bold">ON</text>
<rect x="1209" y="172" width="177" height="18" fill="#5a5a5a"/>
<text x="1212" y="186" style="font-size:11.500px;fill:#c2c2c2">ACES 1.0 SDR-video (sRGB)</text>
<rect x="1387" y="172" width="19" height="18" fill="#555"/><path d="M1391 179h10l-5 5z" fill="#bbb"/>

<!-- Character -->
<g clip-path="url(#gl)">
<!-- arms -->
<g filter="url(#grain)">
<path d="M368 737C410 722 450 705 490 682C535 660 575 640 612 612C650 585 690 550 722 518L757 583L720 607C680 632 650 650 612 672C570 695 530 710 490 729C450 748 410 765 368 784Z" fill="url(#armL)"/>
<path d="M1084 514C1130 545 1175 570 1224 600C1280 640 1330 680 1365 708C1390 722 1415 732 1435 741V778C1415 770 1385 755 1347 735C1305 712 1265 690 1224 667C1170 635 1110 610 1053 590Z" fill="url(#armR)"/>
</g>
<path d="M1345 729 1362 691C1372 692 1380 698 1386 704L1368 739C1358 738 1351 734 1345 729Z" fill="#2a2a2b"/>
<path d="M1353 712 1360 694 1384 706 1376 722z" fill="#1c1c1d"/>
<path d="M1349 722 1372 733" stroke="#555" stroke-width="1.500"/>
<!-- sleeves -->
<path d="M727 488 720 512 712 522 757 600 767 600 775 540z" fill="#7b7b7b"/>
<path d="M1070 490 1084 512 1065 563 1053 585 1045 560z" fill="#7c7c7c"/>
<!-- neck -->
<path d="M866 405 865 447 868 512H960L962 478 947 447 947 405z" fill="url(#neck)" filter="url(#grain)"/>
<!-- tee -->
<path d="M848 500 870 507Q915 520 957 508L978 507 950 567 953 650 933 760H928z" fill="url(#tee)"/>
<path d="M870 508Q915 523 957 509l-1 13Q915 533 873 520z" fill="#8f8f8c" stroke="#7c7c79" stroke-width=".6"/>
<!-- jacket -->
<g filter="url(#suede)">
<path d="M727 490C750 478 780 473 805 470L843 442 866 450 860 500 850 503 893 610 930 757 931 918H752L770 850 773 800 768 700 769 617 767 600 753 563Z" fill="url(#jk)"/>
<path d="M1073 487C1050 477 1030 475 1007 475L1008 457H983L967 443 947 447 955 480 978 507 950 567 953 650 933 760 931 918H1077L1063 850 1060 800 1062 700 1055 617 1053 577 1072 500Z" fill="url(#jk)"/>
</g>
<!-- shoulder stripes -->
<path d="M738 482 768 476C764 500 768 530 771 575L764 590 754 560Z" fill="#352b2a"/>
<path d="M1036 478 1060 484 1050 560 1045 585C1044 540 1046 510 1036 478Z" fill="#352b2a"/>
<!-- hood -->
<path d="M805 465 843 442 866 450 862 482 850 503 838 492 815 480z" fill="#1e0f0e"/>
<path d="M947 447 967 443 983 457 1008 457 1007 475 990 490 978 507 960 490z" fill="#1e0f0e"/>
<!-- strings -->
<path d="M827 495 839 493 846 599 833 601z" fill="#4b4a4d"/>
<path d="M977 500 987 498 1002 603 989 605z" fill="#4c4b4e"/>
<path d="M833 586 845 585M990 590 1001 592" stroke="#777" stroke-width="1"/>
<!-- zip -->
<path d="M856 530 893 625 924 745" fill="none" stroke="#050505" stroke-width="9"/>
<path d="M850 503 893 610 930 757" fill="none" stroke="#bfbfbf" stroke-width="3" stroke-dasharray="2.500 2"/>
<path d="M978 507 953 570 955 650 934 760" fill="none" stroke="#bfbfbf" stroke-width="2.500" stroke-dasharray="2.500 2"/>
<path d="M933 758 931 918" stroke="#0a0a0a" stroke-width="11"/>
<path d="M935 795 932 918" stroke="#9f9f9f" stroke-width="4.500" stroke-dasharray="2.500 1.500"/>
<path d="M866 560 890 690 920 780" fill="none" stroke="#44190f" stroke-width="2"/>
<path d="M962 570 960 680 946 785" fill="none" stroke="#40160d" stroke-width="2"/>
<!-- pockets -->
<path d="M790 918V897L827 810H897L896 900" fill="none" stroke="#4a3730" stroke-width="1.500"/>
<path d="M983 918 990 808H1047L1056 865" fill="none" stroke="#4a3730" stroke-width="1.500"/>
<!-- ears -->
<path d="M846 340C835 338 829 346 830 358C832 375 838 387 852 392Z" fill="url(#earG)"/>
<path d="M972 345C982 345 985 354 982 365C980 378 975 386 966 390Z" fill="url(#earG)"/>
<circle cx="849" cy="388" r="2.500" fill="#333"/>
<!-- hair -->
<path d="M848 358C835 342 822 330 824 305C826 280 832 260 842 245C855 228 875 212 893 208C915 206 945 220 967 240C980 255 990 275 990 295C990 315 985 332 977 350L960 300 905 250 860 290Z" fill="#17100f" filter="url(#curl)"/>
<!-- face -->
<path d="M853 300C860 270 885 253 910 253C945 253 968 270 972 310L975 345C975 375 968 395 958 405C945 420 925 428 910 428C895 428 880 420 868 408C855 393 849 370 848 340Z" fill="url(#face)" filter="url(#grain)"/>
<path d="M848 400C858 420 862 425 863 430" fill="none" stroke="#7c8a95" stroke-width="1" opacity=".5"/>
<path d="M974 385C965 405 958 420 958 430" fill="none" stroke="#7c8a95" stroke-width="1" opacity=".5"/>
<!-- brows -->
<path d="M862 314C870 303 885 301 902 313 888 308 875 308 862 314Z" fill="#1e1411" stroke="#1e1411" stroke-width="1.800"/>
<path d="M935 314C945 305 958 301 968 316 958 309 947 309 935 314Z" fill="#1e1411" stroke="#1e1411" stroke-width="1.800"/>
<!-- eyes -->
<ellipse cx="886" cy="331" rx="18" ry="10" fill="#6e5443" opacity=".65" filter="url(#sf2)"/>
<ellipse cx="950" cy="331" rx="17" ry="10" fill="#6e5443" opacity=".65" filter="url(#sf2)"/>
<path d="M873 328C880 321 893 322 898 331 892 335 880 335 877 331Z" fill="#a59a8d"/>
<path d="M939 331C944 322 956 321 962 328L958 332C952 335 944 335 939 331Z" fill="#a59a8d"/>
<circle cx="885.500" cy="328" r="6" fill="#5a4330"/><circle cx="885.500" cy="328" r="2.400" fill="#120c09"/>
<circle cx="949.500" cy="328" r="6" fill="#5a4330"/><circle cx="949.500" cy="328" r="2.400" fill="#120c09"/>
<path d="M870 329C878 320 893 321 899 331M938 331C944 321 958 320 965 328" fill="none" stroke="#1d130e" stroke-width="3"/>
<!-- nose/lips -->
<path d="M908 366C913 369 926 369 931 366 928 361 911 361 908 366Z" fill="#a58368" filter="url(#sf)"/>
<path d="M897 388C905 381 913 379 918 381 925 379 935 383 941 388 932 396 906 398 897 388Z" fill="#b8927c"/>
<path d="M897 388Q918 392 941 388" stroke="#8d6757" stroke-width="1" fill="none"/>
</g>
<text x="894" y="917" text-anchor="middle" style="font-size:11px;font-weight:bold;fill:#ececec">persp</text>
<path d="M393 879V897" stroke="#3c9e4c"/><path d="M393 897H403" stroke="#c8443c"/>
<path d="M393 897l-1 3" stroke="#3e6cc4"/>
<text x="391" y="884" style="font-size:8px;fill:#2d8a3c">y</text><text x="405" y="898" style="font-size:8px;fill:#b5352d">x</text><text x="393" y="902" style="font-size:7px;fill:#3358a8">z</text>

<!-- attribute editor -->
<rect x="1436" y="151" width="9" height="775" fill="#3c3c3c"/>
<rect x="1445" y="151" width="459" height="775" fill="#444"/>
<g class="m"><text x="1452" y="165" textLength="18">List</text><text x="1484" y="165" textLength="43">Selected</text><text x="1542" y="165" textLength="30">Focus</text><text x="1587" y="165" textLength="51">Attributes</text><text x="1653" y="165" textLength="37">Display</text><text x="1705" y="165" textLength="29">Show</text><text x="1749" y="165" textLength="24">Help</text></g>
<text x="1672" y="538" text-anchor="middle" style="font-weight:bold;font-size:11.500px;fill:#c9c9c9" textLength="302">Select an object in the scene to view and edit its attributes</text>
<rect x="1596" y="899" width="153" height="24" fill="#5d5d5d"/>
<text x="1519" y="916" text-anchor="middle" class="dim" textLength="30">Select</text>
<text x="1672" y="916" text-anchor="middle" style="fill:#e2e2e2" textLength="79">Load Attributes</text>
<text x="1825" y="916" text-anchor="middle" class="dim" textLength="46">Copy Tab</text>
<rect x="1904" y="151" width="16" height="775" fill="#393939"/>
<rect x="1904" y="307" width="16" height="105" fill="#4a4a4a"/>
<path d="M1904 307.500h16M1904 412.500h16M1904 524.500h16M1904 573.500h16M1904 754.500h16M1904 825.500h16" stroke="#2d2d2d"/>
<g class="vt">
<text transform="translate(1906 160) rotate(90)" textLength="134">Channel Box / Layer Editor</text>
<text transform="translate(1906 319) rotate(90)" textLength="80" style="fill:#eee">Attribute Editor</text>
<text transform="translate(1906 423) rotate(90)" textLength="87">Modeling Toolkit</text>
<text transform="translate(1906 535) rotate(90)" textLength="25">XGen</text>
<text transform="translate(1906 585) rotate(90)" textLength="155">XGen Interactive Groom Editor</text>
<text transform="translate(1906 765) rotate(90)" textLength="49">Human IK</text>
</g>

<!-- blue bar -->
<rect x="364" y="919" width="1122" height="10" fill="#4a9dc8"/>
<rect x="0" y="926" width="364" height="5" fill="#444"/>
<rect x="1486" y="926" width="434" height="5" fill="#444"/>
<rect x="0" y="929" width="1920" height="6" fill="#414141"/>

<!-- timeline -->
<rect y="935" width="1920" height="35" fill="#444"/>
<g stroke="#6f6f6f" stroke-dasharray="1 2"><path d="M5 935V966M8 935V966M5 972V1004M8 972V1004M5 1010V1038M8 1010V1038"/></g>
<rect x="13" y="935" width="1612" height="30" fill="#2d2d2d"/>
<rect x="21" y="935" width="50" height="30" fill="#555"/>
<path stroke="#7d7d7d" stroke-width="1.500" d="M20.500 948V965M72 948V965M123.500 948V965M175 948V965M226.500 948V965M278 948V965M329.500 948V965M381 948V965M433 948V965M484.500 948V965M536 948V965M587.500 948V965M639 948V965M690.500 948V965M742 948V965M793.500 948V965M845 948V965M896.500 948V965M948 948V965M999.500 948V965M1051.500 948V965M1103 948V965M1154.500 948V965M1206 948V965M1257.500 948V965M1309 948V965M1360.500 948V965M1412 948V965M1463.500 948V965M1515 948V965M1566.500 948V965"/>
<g class="tl"><text x="34" y="944">0</text><text x="85" y="944">1</text><text x="137" y="944">2</text><text x="188" y="944">3</text><text x="240" y="944">4</text><text x="291" y="944">5</text><text x="343" y="944">6</text><text x="395" y="944">7</text><text x="446" y="944">8</text><text x="498" y="944">9</text><text x="552" y="944">10</text><text x="603" y="944">11</text><text x="655" y="944">12</text><text x="706" y="944">13</text><text x="758" y="944">14</text><text x="809" y="944">15</text><text x="861" y="944">16</text><text x="912" y="944">17</text><text x="964" y="944">18</text><text x="1015" y="944">19</text><text x="1067" y="944">20</text><text x="1118" y="944">21</text><text x="1170" y="944">22</text><text x="1221" y="944">23</text><text x="1273" y="944">24</text><text x="1324" y="944">25</text><text x="1376" y="944">26</text><text x="1427" y="944">27</text><text x="1479" y="944">28</text><text x="1530" y="944">29</text><text x="1582" y="944">30</text></g>
<text x="30" y="961" style="fill:#e4e4e4">0</text>
<rect x="1632" y="941" width="88" height="18" fill="#2d2d2d"/>
<text x="1638" y="955" style="fill:#d8d8d8">0</text>
<g fill="#bdbdbd">
<path d="M1730 943h2v12h-2zM1741 943v12l-7-6zM1748 943v12l-7-6z"/>
<path d="M1755 943h2v12h-2zM1769 943v12l-10-6z"/>
<path d="M1791 943v12l-8-6z"/>
<path d="M1813 941v16l-12-8z"/>
<path d="M1824 941v16l13-8z"/>
<path d="M1847 943v12l8-6z"/>
<path d="M1870 943v12l9-6zM1880 943h2v12h-2z"/>
<path d="M1891 943v12l7-6zM1898 943v12l7-6zM1905 943h2v12h-2z"/>
</g>
<path d="M1778.500 941V957M1858.500 941V957" stroke="#dc8b4a" stroke-width="2"/>

<!-- range row -->
<rect y="967" width="1920" height="3" fill="#3a3a3a"/>
<rect x="0" y="1005" width="1920" height="2" fill="#3a3a3a"/>
<rect x="14" y="976" width="88" height="25" rx="1" fill="#2d2d2d"/><text x="19" y="993">0</text>
<rect x="110" y="976" width="88" height="25" rx="1" fill="#2d2d2d"/><text x="115" y="993">0</text>
<rect x="206" y="976" width="919" height="25" fill="#3d3d3d"/>
<rect x="210" y="978" width="910" height="20" rx="3" fill="#5f5f5f"/>
<rect x="213" y="980" width="15" height="16" rx="3" fill="#8b8b8b"/>
<rect x="1102" y="980" width="16" height="16" rx="3" fill="#8b8b8b"/>
<text x="232" y="993" style="fill:#bdbdbd">0</text><text x="1085" y="993" style="fill:#bdbdbd">30</text>
<rect x="1132" y="976" width="88" height="25" rx="1" fill="#2d2d2d"/><text x="1137" y="993">30</text>
<rect x="1228" y="976" width="88" height="25" rx="1" fill="#2d2d2d"/><text x="1233" y="993">30</text>
<use href="#sep" x="1321" y="989"/>
<path d="M1339 977h9v19l-4.500-5-4.500 5z" fill="#e27f45"/><path d="M1346 980h8M1350 976v8" stroke="#ddd" stroke-width="2"/>
<use href="#sep" x="1365" y="989"/>
<path d="M1381 986h9l-4.500 5z" fill="none" stroke="#aaa"/>
<rect x="1398.500" y="976.500" width="99" height="24" fill="none" stroke="#525252"/>
<text x="1403" y="993" style="fill:#bbb" textLength="86">No Character Set</text>
<path d="M1510 985h9l-4.500 5z" fill="none" stroke="#aaa"/>
<rect x="1527.500" y="976.500" width="99" height="24" fill="none" stroke="#525252"/>
<text x="1532" y="993" style="fill:#bbb" textLength="73">No Anim Layer</text>
<use href="#sep" x="1638" y="989"/>
<rect x="1652" y="978" width="75" height="19" fill="#5a5a5a"/><rect x="1728" y="978" width="18" height="19" fill="#5a5a5a"/>
<text x="1655" y="993" style="fill:#c2c2c2" textLength="31">24 fps</text>
<use href="#da" x="1737" y="987"/>
<path d="M1763 984h9c4 0 4 5 2 7M1775 990h-9c-4 0-4-5-2-7M1771 981l3 3-3 3M1767 993l-3-3 3-3" fill="none" stroke="#cfcfcf" stroke-width="1.600"/>
<rect x="1790" y="982" width="15" height="14" fill="none" stroke="#dc8b4a" stroke-width="2"/><path d="M1790 986h15M1795 986v10M1800 986v10" stroke="#dc8b4a" stroke-width="1.500"/><path d="M1801 980l5-3v6z" fill="#bbb"/>
<use href="#sep" x="1820" y="989"/>
<path d="M1834 985h3l5-4v16l-5-4h-3z" fill="#bdbdbd"/><path d="M1845 984c2 3 2 7 0 10M1848 982c3 4 3 10 0 14" fill="none" stroke="#888"/>
<circle cx="1871" cy="989" r="7" fill="none" stroke="#bbb" stroke-width="1.500" stroke-dasharray="8 2"/><path d="M1871 984v5h3" stroke="#dc8b4a" stroke-width="1.500" fill="none"/>
<circle cx="1893" cy="982" r="3" fill="none" stroke="#bbb" stroke-dasharray="2 1"/>
<circle cx="1902" cy="983" r="2.300" fill="#dc8b4a"/><path d="M1896 991l5-4 3 3 3 1M1901 987l-1 5 3 3-1 3M1900 992l-4 5" fill="none" stroke="#dc8b4a" stroke-width="2"/>

<!-- command row -->
<circle cx="22" cy="1024" r="8" fill="#8a8a8a"/><text x="22" y="1029" text-anchor="middle" style="font-size:13px;font-weight:bold;fill:#444">?</text>
<rect x="815" y="1007" width="13" height="33" fill="#3c3c3c"/><path d="M820 1009V1038M823 1009V1038" stroke="#8a8a8a" stroke-dasharray="1 2"/>
<text x="841" y="1028" style="fill:#d4d4d4">MEL</text>
<rect x="876" y="1012" width="409" height="23" rx="2" fill="#2d2d2d"/>
<rect x="1293" y="1012" width="594" height="23" rx="2" fill="#2d2d2d"/>
<rect x="1892" y="1015" width="19" height="19" fill="#8d8d8d"/><rect x="1892" y="1015" width="19" height="3" fill="#bbb"/><text x="1901.500" y="1030" text-anchor="middle" style="font-size:10px;fill:#333">{;}</text>

<!-- taskbar -->
<rect y="1040" width="1920" height="40" fill="url(#tbg)"/>
<g fill="#f2f2f2"><path d="M16 1053l7-1v7.500h-7zM24 1051.800l9-1.300v9h-9zM16 1060.500h7v7.500l-7-1zM24 1060.500h9v9l-9-1.300z"/></g>
<rect x="48" y="1040" width="287" height="40" fill="#f1f1f1"/>
<circle cx="70" cy="1057" r="5.500" fill="none" stroke="#222" stroke-width="1.300"/><path d="M66 1061l-6 7" stroke="#222" stroke-width="1.300"/>
<text x="88" y="1066" style="font-size:15px;fill:#333" textLength="163">Taper ici pour rechercher</text>
<path d="M353 1054h10v4h-10zM353 1062h10v4h-10zM351 1051h14M351 1069h14M367 1056v6" fill="none" stroke="#e8e8e8" stroke-width="1.200"/><rect x="365" y="1058" width="3" height="3" fill="#fff"/>
<circle cx="411" cy="1060" r="12" fill="#1c87c9"/><path d="M400 1056c2-9 16-11 22-3 2 4 0 9-4 9-3 0-5-1-6-4-3-3-9-3-12-2z" fill="#5ac25f"/><path d="M403 1060c-1 7 5 11 11 11 3 0 6-1 8-3-5 1-10 0-11-4-1-3 0-5 2-6-4-1-8 0-10 2z" fill="#0a5aa0"/>
<path d="M449 1049h10l3 3h8v19h-21z" fill="#e9b93a"/><rect x="449" y="1058" width="21" height="13" fill="#f7d35a"/><rect x="454" y="1062" width="11" height="9" fill="#4293c4"/><rect x="457" y="1066" width="5" height="5" fill="#f0d070"/>
<path d="M497 1055h22v14a2 2 0 0 1-2 2h-18a2 2 0 0 1-2-2z" fill="#e8ecee"/><path d="M503 1055v-3c0-4 10-4 10 0v3" fill="none" stroke="#3ea1c9" stroke-width="1.800"/><rect x="504" y="1058" width="4" height="4" fill="#e24a2a"/><rect x="509" y="1058" width="4" height="4" fill="#6ab63b"/><rect x="504" y="1063" width="4" height="4" fill="#2f9ae0"/><rect x="509" y="1063" width="4" height="4" fill="#f1b41e"/>
<path d="M551 1050h14l4 5v15h-18z" fill="#1f76bf"/><path d="M558 1052l11 5v7l-8 6h-6z" fill="#2ea6e6"/><rect x="546" y="1054" width="15" height="15" fill="#0f5ba7"/><circle cx="553.500" cy="1061.500" r="4.300" fill="none" stroke="#fff" stroke-width="1.800"/>
<ellipse cx="607" cy="1060" rx="11" ry="12" fill="#c1171f"/><ellipse cx="607" cy="1060" rx="5.500" ry="10" fill="#1f3948"/>
<circle cx="656" cy="1060" r="12" fill="#f4c20d"/><path d="M656 1060 646 1053a12 12 0 0 1 20 0z" fill="#dd4b3e"/><path d="M656 1060 646 1053a12 12 0 0 0 6 19z" fill="#1fa463"/><circle cx="656" cy="1060" r="5" fill="#3a7fd9" stroke="#eee" stroke-width="1.500"/>
<rect x="693" y="1048" width="23" height="23" rx="3" fill="#e8ecf0"/><text x="696" y="1065" style="font-size:14px;font-weight:bold;fill:#2f73b8">Ps</text>
<rect x="730" y="1040" width="48" height="38" fill="#4d6270"/>
<rect x="742" y="1048" width="24" height="24" fill="#cfe9e6"/><path d="M744 1068V1050h4l6 9 6-9h4v18h-4v-10l-6 8-6-8v10z" fill="#12898f"/>
<rect x="793" y="1051" width="20" height="15" fill="#c8ccd0"/><path d="M796 1062l3-6 3 3 3-6 3 6 3 3" stroke="#4f8fc4" fill="none"/><ellipse cx="802" cy="1069" rx="6" ry="2.500" fill="#ccc"/>
<rect x="440" y="1078" width="40" height="2" fill="#7db4db"/><rect x="640" y="1078" width="36" height="2" fill="#7db4db"/><rect x="730" y="1078" width="48" height="2" fill="#7db4db"/><rect x="783" y="1078" width="40" height="2" fill="#7db4db"/>
<!-- tray -->
<circle cx="1533" cy="1060" r="10" fill="#e89420"/><ellipse cx="1527" cy="1053" rx="7" ry="4" fill="#9fc0dd"/><ellipse cx="1539" cy="1067" rx="7" ry="4" fill="#b4cde2"/>
<g class="tb">
<text x="1553" y="1066" style="font-size:14px" textLength="28">18°C</text>
<text x="1591" y="1066" style="font-size:14px" textLength="56">Eclaircies</text>
<text x="1768" y="1065" style="font-size:13px" textLength="21">FRA</text>
<text x="1832" y="1056" text-anchor="middle" style="font-size:12.500px">17:27</text>
<text x="1832" y="1074" text-anchor="middle" style="font-size:12.500px" textLength="58">06/12/2024</text>
</g>
<path d="M1671 1063l6-6 6 6" fill="none" stroke="#eee" stroke-width="1.200"/>
<rect x="1697" y="1055" width="7" height="10" rx="1" fill="none" stroke="#eee"/><path d="M1704 1058l3-2v8l-3-2M1698 1050h6M1698 1070h6" stroke="#eee" fill="none"/>
<path d="M1721 1068c1-6 4-10 11-12M1724 1068c1-4 3-6 7-8M1727 1068c1-2 2-3 4-4" fill="none" stroke="#ddd"/><circle cx="1731" cy="1068" r="1.200" fill="#eee"/>
<path d="M1743 1057h3l3-3v13l-3-3h-3z" fill="none" stroke="#eee"/><path d="M1752 1057c1.500 2 1.500 5 0 7M1755 1055c2.500 3 2.500 9 0 12" fill="none" stroke="#ddd"/>
<path d="M1879 1052h15v14h-15z" fill="#eee"/><path d="M1881 1055h11M1881 1058h11M1881 1061h7" stroke="#445"/>
<circle cx="1895" cy="1068" r="7" fill="#2a3a4d" stroke="#aaa"/><text x="1895" y="1072" text-anchor="middle" style="font-size:10px;fill:#fff;font-weight:bold">5</text>
<path d="M1916.500 1040V1080" stroke="#5b6a7a"/>
</svg>
</body></html>
